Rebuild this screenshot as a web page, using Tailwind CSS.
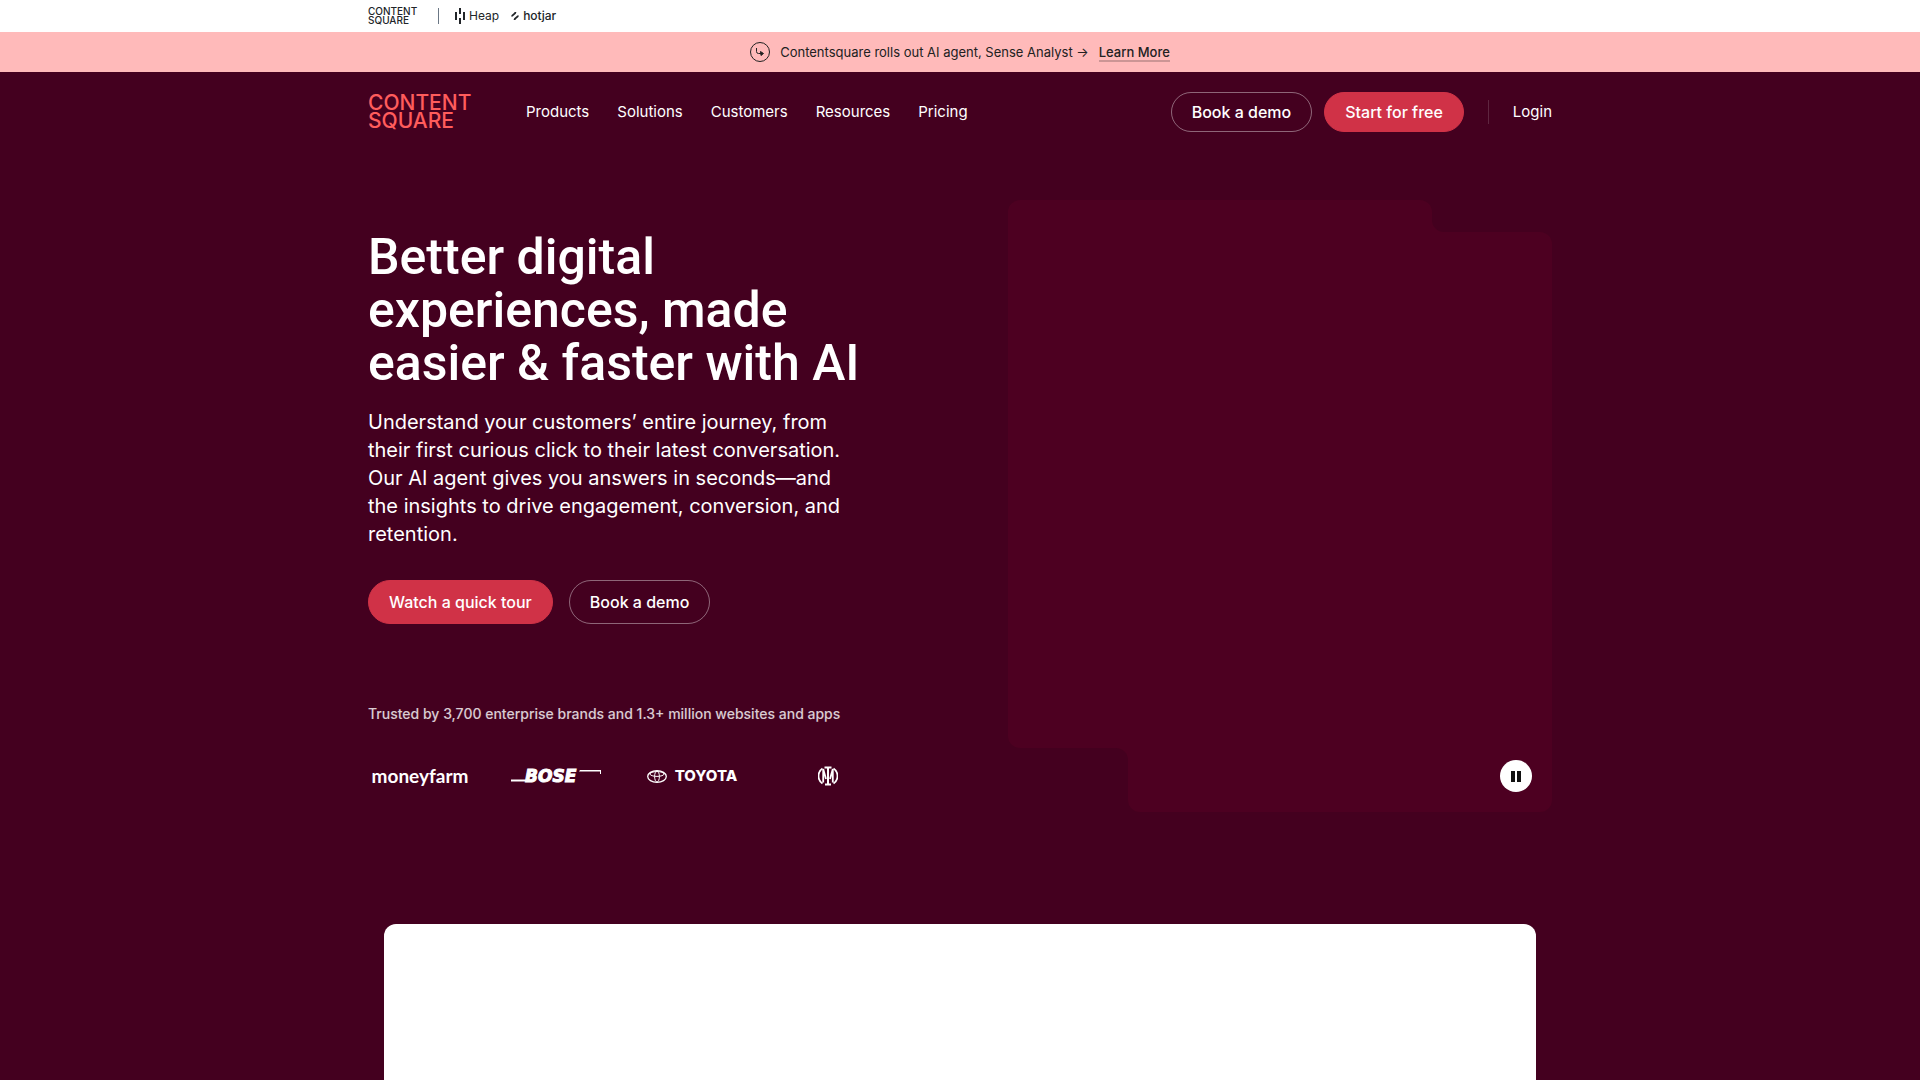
<!DOCTYPE html>
<html lang="en">

<head>
    <meta charset="UTF-8">
    <meta name="viewport" content="width=device-width, initial-scale=1.0">
    <title>Contentsquare | Better digital experiences</title>
    <script src="https://cdn.jsdelivr.net/npm/@tailwindcss/browser@4"></script>
</head>

<body class="min-h-screen flex flex-col bg-[#44001f] text-white font-['Inter',sans-serif]">
    <!-- Brand bar -->
    <div class="bg-white text-[#212529]">
        <div class="max-w-[1184px] mx-auto h-8 flex items-center">
            <a href="#" class="w-[54px] text-[10px] leading-[9px] font-medium">CONTENT<br>SQUARE</a>
            <span class="w-px h-4 mx-4 bg-[#6b7785]"></span>
            <a href="#" class="flex items-center gap-1 text-[12px] leading-4">
                <svg class="w-[10px] h-4" viewBox="0 0 10 16" fill="currentColor">
                    <path d="M0 4h2v8H0zM4 0h2v6H4zM4 10h2v6H4zM8 4h2v8H8z" />
                </svg>
                Heap
            </a>
            <a href="#" class="flex items-center gap-1 ml-3 text-[12px] leading-4 font-medium">
                <svg class="w-2 h-[10px]" viewBox="0 0 8 10" fill="none" stroke="currentColor" stroke-width="1.8">
                    <path d="M1 5.500C1 3.500 4.500 3.500 4.500 1M3.500 9C3.500 6.500 7 6.500 7 4.500" />
                </svg>
                hotjar
            </a>
        </div>
    </div>

    <!-- Announcement -->
    <div class="h-10 flex items-center justify-center bg-[#ffbaba] text-[#212121] text-[13px]">
        <svg class="w-5 h-5 mr-[10px]" viewBox="0 0 20 20" fill="none" stroke="currentColor">
            <circle cx="10" cy="10" r="9.500" />
            <path d="M6.500 6v3.500a2 2 0 0 0 2 2H12" />
            <path d="M10.500 9.500l3 2-2.500 2z" fill="currentColor" />
        </svg>
        <p class="pt-px">Contentsquare rolls out AI agent, Sense Analyst →</p>
        <a href="#" class="ml-[10px] pt-0.5 leading-4 font-medium border-b-2 border-[#cc9595]">Learn More</a>
    </div>

    <!-- Header -->
    <header class="w-full max-w-[1184px] mx-auto h-20 flex items-center text-[15px]">
        <a href="#" class="w-[110px] text-[21px] leading-[18px] font-medium text-[#ff5c5c]">CONTENT<br>SQUARE</a>
        <nav class="flex gap-7 ml-12">
            <a href="#">Products</a>
            <a href="#">Solutions</a>
            <a href="#">Customers</a>
            <a href="#">Resources</a>
            <a href="#">Pricing</a>
        </nav>
        <div class="flex items-center ml-auto">
            <button class="h-10 px-5 rounded-full border border-white/40 text-base font-medium">Book a demo</button>
            <button class="h-10 px-5 ml-3 rounded-full border border-[#d03247] bg-[#d03247] text-base font-medium">Start for free</button>
            <span class="w-px h-6 mx-6 bg-white/15"></span>
            <a href="#">Login</a>
        </div>
    </header>

    <!-- Hero -->
    <main class="w-full max-w-[1184px] mx-auto pt-12 flex justify-between">
        <section class="w-[512px] pt-[31px]">
            <h1 class="text-[50px] leading-[53px] font-medium font-['Roboto',sans-serif]">Better digital<br>experiences, made<br>easier &amp; faster with AI</h1>
            <p class="mt-[18px] pr-6 text-xl leading-7">Understand your customers’ entire journey, from their first curious click to their latest conversation. Our AI agent gives you answers in seconds—and the insights to drive engagement, conversion, and retention.</p>
            <div class="flex gap-4 mt-8">
                <button class="h-11 px-5 rounded-full border border-[#d03247] bg-[#d03247] font-medium">Watch a quick tour</button>
                <button class="h-11 px-5 rounded-full border border-white/40 font-medium">Book a demo</button>
            </div>
            <p class="mt-20 text-sm font-medium text-white/80">Trusted by 3,700 enterprise brands and 1.3+ million websites and apps</p>
            <div class="grid grid-cols-4 gap-8 items-center justify-items-center h-12 mt-7">
                <span class="text-[19px] leading-6 font-bold font-['Lato',sans-serif]">moneyfarm</span>
                <svg class="w-[90px] h-6" viewBox="0 0 90 24" fill="#fff" role="img" aria-label="Bose">
                    <path d="M0 15.500h16l-1 2H0zM69 6h21v4h-1V7.500H68z" />
                    <text x="14" y="18" font-family="DejaVu Sans" font-size="17" font-weight="700" font-style="italic" stroke="#fff">BOSE</text>
                </svg>
                <span class="flex items-center gap-2 font-extrabold text-[15px]">
                    <svg class="w-5 h-[13px]" viewBox="0 0 20 13" fill="none" stroke="#fff">
                        <ellipse cx="10" cy="6.500" rx="9.300" ry="5.800" stroke-width="1.300" />
                        <ellipse cx="10" cy="4" rx="7" ry="2.400" />
                        <ellipse cx="10" cy="6.500" rx="2.400" ry="5.500" />
                    </svg>
                    TOYOTA
                </span>
                <svg class="w-5 h-5" viewBox="0 0 20 20" fill="none" stroke="#fff" role="img" aria-label="Inter">
                    <path d="M4.500 2.500a9 9 0 0 0 0 15M15.500 2.500a9 9 0 0 1 0 15" stroke-width="1.800" />
                    <path d="M6.500 1.500h7M7 18.500h6M10 1.500v17" stroke-width="2" />
                    <path d="M5.200 16.500V3l2.800 10M14.800 16.500V3L12 13" stroke-width="1.800" />
                </svg>
            </div>
        </section>

        <!-- Stepped video panel -->
        <section class="relative w-[544px] h-[612px]">
            <svg class="w-full h-full" viewBox="0 0 544 612" fill="#4d0021">
                <path d="M12 0H412a12 12 0 0 1 12 12V20a12 12 0 0 0 12 12H532a12 12 0 0 1 12 12V600a12 12 0 0 1-12 12H132a12 12 0 0 1-12-12V560a12 12 0 0 0-12-12H12a12 12 0 0 1-12-12V12A12 12 0 0 1 12 0z" />
            </svg>
            <button aria-label="Pause" class="absolute right-5 bottom-5 w-8 h-8 rounded-full bg-white flex items-center justify-center">
                <svg class="w-[10px] h-[11px]" viewBox="0 0 10 11" fill="#111">
                    <path d="M0 0h4v11H0zM6 0h4v11H6z" />
                </svg>
            </button>
        </section>
    </main>

    <!-- Content card -->
    <div class="w-full max-w-[1152px] mx-auto mt-28 grow rounded-t-xl bg-white"></div>
</body>

</html>
